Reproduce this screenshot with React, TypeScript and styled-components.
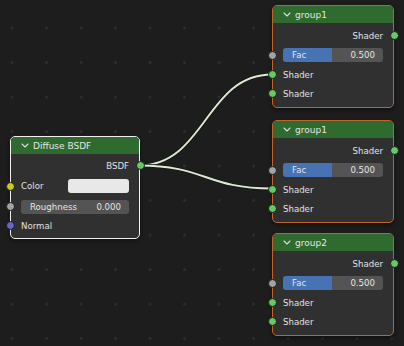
import React from 'react';
import styled, { createGlobalStyle } from 'styled-components';

const GlobalStyle = createGlobalStyle`
  html, body {
    margin: 0;
    padding: 0;
    background: #1d1d1d;
  }
  * {
    box-sizing: border-box;
  }
`;

type SocketKind = 'shader' | 'value' | 'color' | 'vector';

const socketColors: Record<SocketKind, string> = {
  shader: '#66c966',
  value: '#a3a3a3',
  color: '#c9c92c',
  vector: '#6464c9',
};

const Canvas = styled.div`
  position: relative;
  width: 404px;
  height: 346px;
  overflow: hidden;
  background-color: #1d1d1d;
  background-image: radial-gradient(circle, #2e2e2e 0, #2e2e2e 1px, transparent 1.7px);
  background-size: 34.5px 34.5px;
  background-position: -5.2px 10.8px;
  font-family: 'DejaVu Sans', 'Liberation Sans', sans-serif;
`;

const Links = styled.svg`
  position: absolute;
  left: 0;
  top: 0;
  width: 404px;
  height: 346px;
  z-index: 0;
  pointer-events: none;
`;

const NodeBox = styled.div<{ $x: number; $y: number; $w: number; $border: string }>`
  position: absolute;
  left: ${(p) => p.$x}px;
  top: ${(p) => p.$y}px;
  width: ${(p) => p.$w}px;
  background: #303030;
  border: 1px solid ${(p) => p.$border};
  border-radius: 5px;
  box-shadow: 0 2px 4px rgba(0, 0, 0, 0.45);
  display: flex;
  flex-direction: column;
  z-index: 1;
`;

const Header = styled.div`
  height: 17px;
  background: #2f6a2e;
  border-radius: 4px 4px 0 0;
  display: flex;
  align-items: center;
  gap: 4px;
  padding-left: 10px;
  color: #e6e6e6;
  font-size: 9px;
`;

const Body = styled.div<{ $pt: number; $pb: number }>`
  display: flex;
  flex-direction: column;
  padding: ${(p) => p.$pt}px 0 ${(p) => p.$pb}px;
`;

const Row = styled.div<{ $out?: boolean; $h?: number }>`
  position: relative;
  height: ${(p) => p.$h ?? 19}px;
  display: flex;
  align-items: center;
  justify-content: ${(p) => (p.$out ? 'flex-end' : 'flex-start')};
  padding: 0 10px 0 10px;
  color: #e2e2e2;
  font-size: 8.6px;
`;

const Socket = styled.span<{ $kind: SocketKind; $out?: boolean }>`
  position: absolute;
  top: 50%;
  ${(p) => (p.$out ? 'right: -5.5px;' : 'left: -5.5px;')}
  width: 9px;
  height: 9px;
  margin-top: -4.5px;
  border-radius: 50%;
  background: ${(p) => socketColors[p.$kind]};
  border: 1px solid #1a1a1a;
`;

const Label = styled.span`
  white-space: nowrap;
`;

const Field = styled.div`
  flex: 1;
  height: 14px;
  border-radius: 3px;
  background: #545454;
  display: flex;
  align-items: center;
  justify-content: space-between;
  padding: 0 8px 0 9px;
  color: #e6e6e6;
  font-size: 8.6px;
`;

const SliderField = styled(Field)<{ $fill: number }>`
  background: linear-gradient(
    to right,
    #4772b3 0,
    #4772b3 ${(p) => p.$fill}%,
    #545454 ${(p) => p.$fill}%,
    #545454 100%
  );
`;

const Swatch = styled.div`
  width: 61px;
  height: 14px;
  margin-left: auto;
  border-radius: 3px;
  background: #e8e8e8;
`;

const Chevron = () => (
  <svg width="8" height="5" viewBox="0 0 8 5">
    <path d="M1 1 L4 4 L7 1" fill="none" stroke="#dcdcdc" strokeWidth="1.1" strokeLinecap="round" strokeLinejoin="round" />
  </svg>
);

const GroupNode: React.FC<{ x: number; y: number; name: string }> = ({ x, y, name }) => (
  <NodeBox $x={x} $y={y} $w={122} $border="#c2642a">
    <Header>
      <Chevron />
      <span>{name}</span>
    </Header>
    <Body $pt={3} $pb={4}>
      <Row $out>
        <Label>Shader</Label>
        <Socket $kind="shader" $out />
      </Row>
      <Row $h={20}>
        <SliderField $fill={49}>
          <span>Fac</span>
          <span>0.500</span>
        </SliderField>
        <Socket $kind="value" />
      </Row>
      <Row>
        <Label>Shader</Label>
        <Socket $kind="shader" />
      </Row>
      <Row>
        <Label>Shader</Label>
        <Socket $kind="shader" />
      </Row>
    </Body>
  </NodeBox>
);

const link = (x1: number, y1: number, x2: number, y2: number) => {
  const h = (x2 - x1) * 0.5;
  return `M${x1} ${y1} C${x1 + h} ${y1} ${x2 - h} ${y2} ${x2} ${y2}`;
};

export default function App() {
  const links = [link(139, 165.5, 272, 74.5), link(139, 165.5, 272, 188.5)];
  return (
    <>
      <GlobalStyle />
      <Canvas>
        <Links viewBox="0 0 404 346">
          {links.map((d, i) => (
            <g key={i}>
              <path d={d} fill="none" stroke="#161616" strokeWidth="3.4" />
              <path d={d} fill="none" stroke="#dcecd4" strokeWidth="1.9" />
            </g>
          ))}
        </Links>

        <NodeBox $x={10} $y={136} $w={130} $border="#f0f0f0">
          <Header>
            <Chevron />
            <span>Diffuse BSDF</span>
          </Header>
          <Body $pt={2} $pb={3}>
            <Row $out>
              <Label>BSDF</Label>
              <Socket $kind="shader" $out />
            </Row>
            <Row $h={22}>
              <Label>Color</Label>
              <Swatch />
              <Socket $kind="color" />
            </Row>
            <Row>
              <Field>
                <span>Roughness</span>
                <span>0.000</span>
              </Field>
              <Socket $kind="value" />
            </Row>
            <Row>
              <Label>Normal</Label>
              <Socket $kind="vector" />
            </Row>
          </Body>
        </NodeBox>

        <GroupNode x={272} y={5} name="group1" />
        <GroupNode x={272} y={120} name="group1" />
        <GroupNode x={272} y={233} name="group2" />
      </Canvas>
    </>
  );
}
